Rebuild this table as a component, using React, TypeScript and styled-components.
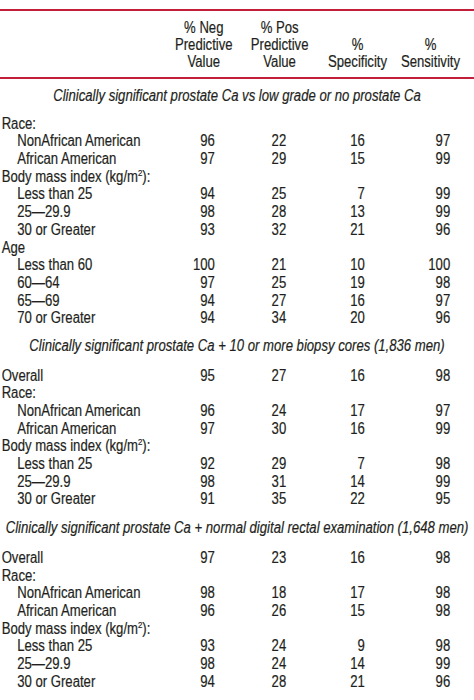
import React from 'react';
import styled, { createGlobalStyle } from 'styled-components';

const GlobalStyle = createGlobalStyle`
  html, body {
    margin: 0;
    padding: 0;
    background: #ffffff;
    overflow: hidden;
  }
  body {
    font-family: "Liberation Sans", Arial, sans-serif;
    color: #231f20;
  }
`;

// the print table is set in a condensed grotesque; we squeeze Liberation Sans
// horizontally, so every horizontal size below is in un-squeezed units
const SQUEEZE = 0.82;

// column boxes: label | neg | pos | spec | sens
const COLS = '207px 83px 102px 88px 90px';
// right padding so the numbers sit under each header like the print table
const NUM_PAD = [28, 43, 35, 21];

const Viewport = styled.div`
  width: 474px;
  height: 700px;
  overflow: hidden;
`;

const Table = styled.div`
  width: ${474 / SQUEEZE}px;
  padding-top: 9px;
  font-size: 16px;
  -webkit-text-stroke: 0.2px currentColor;
  transform: scaleX(${SQUEEZE});
  transform-origin: left top;
`;

const Rule = styled.div`
  height: 2px;
  background: #c41e3d;
`;

const HeadRow = styled.div`
  display: grid;
  grid-template-columns: ${COLS};
  padding: 8px 0 7px;
  line-height: 17px;
`;

const HeadCell = styled.div`
  display: flex;
  flex-direction: column;
  justify-content: flex-end;
  align-items: center;
  text-align: center;
  white-space: nowrap;
`;

const Caption = styled.div<{ $top: number; $bottom: number }>`
  display: flex;
  justify-content: center;
  padding: ${p => p.$top}px 0 ${p => p.$bottom}px;
  line-height: 17.7px;
  font-style: italic;
  white-space: nowrap;
`;

const Row = styled.div`
  display: grid;
  grid-template-columns: ${COLS};
  line-height: 17.7px;
  height: 17.7px;
`;

const Label = styled.div<{ $indent?: boolean }>`
  padding-left: ${p => (p.$indent ? 21 : 2)}px;
  white-space: nowrap;
`;

const Num = styled.div<{ $col: number }>`
  text-align: right;
  padding-right: ${p => NUM_PAD[p.$col]}px;
`;

const Sup = styled.sup`
  font-size: 0.6em;
  line-height: 0;
  vertical-align: 0.6em;
`;

type Line = { label: React.ReactNode; indent?: boolean; vals?: (string | number)[] };

const bmi = (
  <>
    Body mass index (kg/m<Sup>2</Sup>):
  </>
);

const sections: { caption: string; top: number; bottom: number; rows: Line[] }[] = [
  {
    caption: 'Clinically significant prostate Ca vs low grade or no prostate Ca',
    top: 8,
    bottom: 10,
    rows: [
      { label: 'Race:' },
      { label: 'NonAfrican American', indent: true, vals: [96, 22, 16, 97] },
      { label: 'African American', indent: true, vals: [97, 29, 15, 99] },
      { label: bmi },
      { label: 'Less than 25', indent: true, vals: [94, 25, 7, 99] },
      { label: '25\u201429.9', indent: true, vals: [98, 28, 13, 99] },
      { label: '30 or Greater', indent: true, vals: [93, 32, 21, 96] },
      { label: 'Age' },
      { label: 'Less than 60', indent: true, vals: [100, 21, 10, 100] },
      { label: '60\u201464', indent: true, vals: [97, 25, 19, 98] },
      { label: '65\u201469', indent: true, vals: [94, 27, 16, 97] },
      { label: '70 or Greater', indent: true, vals: [94, 34, 20, 96] },
    ],
  },
  {
    caption: 'Clinically significant prostate Ca + 10 or more biopsy cores (1,836 men)',
    top: 10,
    bottom: 12,
    rows: [
      { label: 'Overall', vals: [95, 27, 16, 98] },
      { label: 'Race:' },
      { label: 'NonAfrican American', indent: true, vals: [96, 24, 17, 97] },
      { label: 'African American', indent: true, vals: [97, 30, 16, 99] },
      { label: bmi },
      { label: 'Less than 25', indent: true, vals: [92, 29, 7, 98] },
      { label: '25\u201429.9', indent: true, vals: [98, 31, 14, 99] },
      { label: '30 or Greater', indent: true, vals: [91, 35, 22, 95] },
    ],
  },
  {
    caption: 'Clinically significant prostate Ca + normal digital rectal examination (1,648 men)',
    top: 11,
    bottom: 12,
    rows: [
      { label: 'Overall', vals: [97, 23, 16, 98] },
      { label: 'Race:' },
      { label: 'NonAfrican American', indent: true, vals: [98, 18, 17, 98] },
      { label: 'African American', indent: true, vals: [96, 26, 15, 98] },
      { label: bmi },
      { label: 'Less than 25', indent: true, vals: [93, 24, 9, 98] },
      { label: '25\u201429.9', indent: true, vals: [98, 24, 14, 99] },
      { label: '30 or Greater', indent: true, vals: [94, 28, 21, 96] },
    ],
  },
];

const headers = [
  ['% Neg', 'Predictive', 'Value'],
  ['% Pos', 'Predictive', 'Value'],
  ['%', 'Specificity'],
  ['%', 'Sensitivity'],
];

export default function App() {
  return (
    <Viewport>
      <GlobalStyle />
      <Table>
        <Rule />
        <HeadRow>
          <div />
          {headers.map((h, i) => (
            <HeadCell key={i}>
              {h.map(t => (
                <span key={t}>{t}</span>
              ))}
            </HeadCell>
          ))}
        </HeadRow>
        <Rule />
        {sections.map((s, si) => (
          <React.Fragment key={si}>
            <Caption $top={s.top} $bottom={s.bottom}>
              <span>{s.caption}</span>
            </Caption>
            {s.rows.map((r, ri) => (
              <Row key={ri}>
                <Label $indent={r.indent}>{r.label}</Label>
                {(r.vals || ['', '', '', '']).map((v, vi) => (
                  <Num key={vi} $col={vi}>
                    {v}
                  </Num>
                ))}
              </Row>
            ))}
          </React.Fragment>
        ))}
      </Table>
    </Viewport>
  );
}
